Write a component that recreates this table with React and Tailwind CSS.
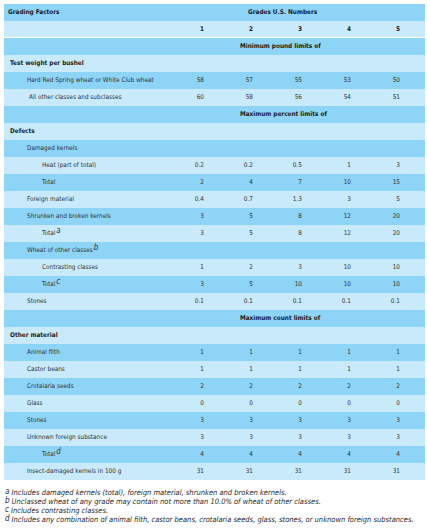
import React from 'react';

const rows = [
  { type: 'colnums' },
  { type: 'sub', label: 'Minimum pound limits of' },
  { type: 'group', label: 'Test weight per bushel' },
  { label: 'Hard Red Spring wheat or White Club wheat', indent: 1, values: ['58', '57', '55', '53', '50'] },
  { label: 'All other classes and subclasses', indent: 1, extra: true, values: ['60', '58', '56', '54', '51'] },
  { type: 'sub', label: 'Maximum percent limits of' },
  { type: 'group', label: 'Defects' },
  { label: 'Damaged kernels', indent: 1 },
  { label: 'Heat (part of total)', indent: 2, values: ['0.2', '0.2', '0.5', '1', '3'] },
  { label: 'Total', indent: 2, values: ['2', '4', '7', '10', '15'] },
  { label: 'Foreign material', indent: 1, values: ['0.4', '0.7', '1.3', '3', '5'] },
  { label: 'Shrunken and broken kernels', indent: 1, values: ['3', '5', '8', '12', '20'] },
  { label: 'Total', sup: 'a', indent: 2, values: ['3', '5', '8', '12', '20'] },
  { label: 'Wheat of other classes', sup: 'b', indent: 1 },
  { label: 'Contrasting classes', indent: 2, values: ['1', '2', '3', '10', '10'] },
  { label: 'Total', sup: 'c', indent: 2, values: ['3', '5', '10', '10', '10'] },
  { label: 'Stones', indent: 1, values: ['0.1', '0.1', '0.1', '0.1', '0.1'] },
  { type: 'sub', label: 'Maximum count limits of' },
  { type: 'group', label: 'Other material' },
  { label: 'Animal filth', indent: 1, values: ['1', '1', '1', '1', '1'] },
  { label: 'Castor beans', indent: 1, values: ['1', '1', '1', '1', '1'] },
  { label: 'Crotalaria seeds', indent: 1, values: ['2', '2', '2', '2', '2'] },
  { label: 'Glass', indent: 1, values: ['0', '0', '0', '0', '0'] },
  { label: 'Stones', indent: 1, values: ['3', '3', '3', '3', '3'] },
  { label: 'Unknown foreign substance', indent: 1, values: ['3', '3', '3', '3', '3'] },
  { label: 'Total', sup: 'd', indent: 2, values: ['4', '4', '4', '4', '4'] },
  { label: 'Insect-damaged kernels in 100 g', indent: 1, values: ['31', '31', '31', '31', '31'] },
];

const footnotes = [
  ['a', 'Includes damaged kernels (total), foreign material, shrunken and broken kernels.'],
  ['b', 'Unclassed wheat of any grade may contain not more than 10.0% of wheat of other classes.'],
  ['c', 'Includes contrasting classes.'],
  ['d', 'Includes any combination of animal filth, castor beans, crotalaria seeds, glass, stones, or unknown foreign substances.'],
];

function Label({ row }) {
  const pad = row.indent === 2 ? 'pl-[38px]' : row.indent === 1 ? (row.extra ? 'pl-[25px]' : 'pl-[23px]') : 'pl-[6px]';
  return (
    <div className={`w-[151px] shrink-0 whitespace-nowrap ${pad}`}>
      {row.label}
      {row.sup && <sup className="relative -top-[2px] ml-[1px] text-[8px] italic">{row.sup}</sup>}
    </div>
  );
}

export default function App() {
  return (
    <div
      className="w-[427px] h-[530px] bg-white pt-[4px] text-[6.4px] leading-none text-[#333]"
      style={{ fontFamily: '"Liberation Sans Narrow", "DejaVu Sans Condensed", "Liberation Sans", sans-serif' }}
    >
      <div className="mx-[4px] w-[421px]">
        {/* header */}
        <div className="flex h-[17px] items-center bg-[#8dd4f6] font-bold text-[#1a1a1a]">
          <div className="w-[200px] shrink-0 pl-[4px]">Grading Factors</div>
          <div className="pl-[44px]">Grades U.S. Numbers</div>
        </div>

        {rows.map((row, i) => {
          const bg = i % 2 === 0 ? 'bg-[#c8eafb]' : 'bg-[#8dd4f6]';
          if (row.type === 'colnums') {
            return (
              <div key={i} className={`flex h-[17px] items-center border-b border-white font-bold text-[#1a1a1a] ${bg}`}>
                <div className="w-[151px] shrink-0" />
                {['1', '2', '3', '4', '5'].map((n) => (
                  <div key={n} className="w-[49px] shrink-0 text-right">{n}</div>
                ))}
              </div>
            );
          }
          if (row.type === 'sub') {
            return (
              <div key={i} className={`flex h-[17px] items-center font-bold text-[#1a1a1a] ${bg}`}>
                <div className="w-[200px] shrink-0" />
                <div className="pl-[36px]">{row.label}</div>
              </div>
            );
          }
          if (row.type === 'group') {
            return (
              <div key={i} className={`flex h-[17px] items-center font-bold text-[#1a1a1a] ${bg}`}>
                <div className="pl-[6px]">{row.label}</div>
              </div>
            );
          }
          return (
            <div key={i} className={`flex h-[17px] items-center ${bg}`}>
              <Label row={row} />
              {(row.values || []).map((v, j) => (
                <div key={j} className="w-[49px] shrink-0 text-right">{v}</div>
              ))}
            </div>
          );
        })}
      </div>

      {/* footnotes */}
      <div className="mt-[8px] pl-[5px] text-[7.5px] italic leading-[9px] text-[#2a2a2a]">
        {footnotes.map(([k, t]) => (
          <div key={k} className="whitespace-nowrap">
            <sup className="relative -top-[1px] mr-[2px] text-[8px]">{k}</sup>
            {t}
          </div>
        ))}
      </div>
    </div>
  );
}
